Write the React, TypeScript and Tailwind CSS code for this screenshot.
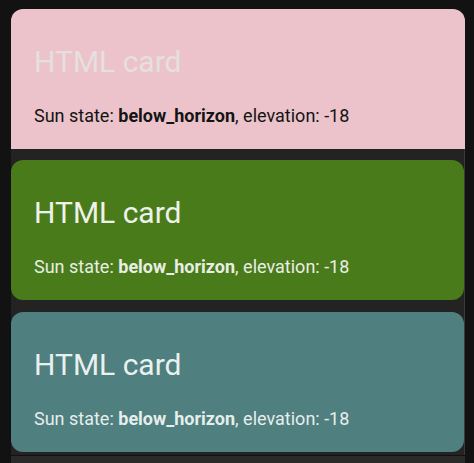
const cards = [
  { bg: 'bg-[#ecc3ca]', title: 'text-[#e6dfe0]', body: 'text-[#141414]', top: true },
  { bg: 'bg-[#4a7b1b]', title: 'text-[#eef2ea]', body: 'text-[#e9eee4]', top: false },
  { bg: 'bg-[#4f7f7e]', title: 'text-[#e9f1f0]', body: 'text-[#e6eeed]', top: false },
];

function HtmlCard({ bg, title, body, top }: (typeof cards)[number]) {
  return (
    <div
      className={`${bg} h-[140px] px-[23px] pt-[34px] ${top ? 'rounded-t-[12px]' : 'rounded-[12px]'}`}
    >
      <h2 className={`${title} text-[30px] leading-[38px] font-normal`}>HTML card</h2>
      <p className={`${body} mt-[23px] text-[18px] leading-[24px]`}>
        Sun state: <b className="font-bold">below_horizon</b>, elevation: -18
      </p>
    </div>
  );
}

export default function App() {
  const [first, ...rest] = cards;
  return (
    <div
      className="min-h-screen bg-[#121212] pl-[11px] pr-[9px] pt-[9px]"
      style={{ fontFamily: 'Roboto, "Liberation Sans", sans-serif' }}
    >
      <HtmlCard {...first} />
      <div className="bg-[#232323] border-r border-[#3a3a3a] flex flex-col gap-[12px] pt-[11px]">
        {rest.map((c, i) => (
          <HtmlCard key={i} {...c} />
        ))}
        <div className="h-[3px] -mt-[12px] bg-[#232323]" />
      </div>
      <div className="h-[1px] bg-[#111]" />
      <div className="h-[20px] bg-[#2a2a2a]" />
    </div>
  );
}
